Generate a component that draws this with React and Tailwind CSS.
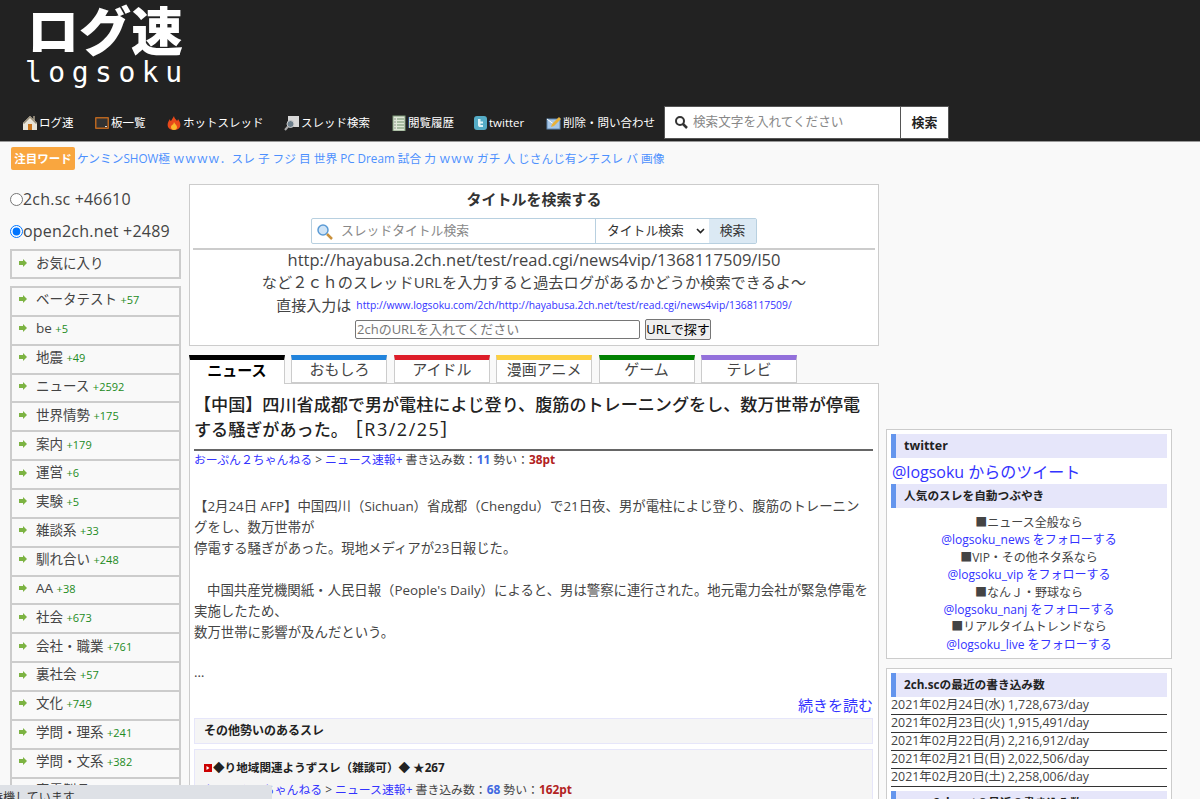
import React from 'react';

const FONT = '"Open Sans", "Noto Sans CJK JP", sans-serif';

const NAV = [
  { label: 'ログ速', icon: 'home', w: 'w-[72px]' },
  { label: '板一覧', icon: 'board', w: 'w-[72px]' },
  { label: 'ホットスレッド', icon: 'fire', w: 'w-[118px]' },
  { label: 'スレッド検索', icon: 'find', w: 'w-[107px]' },
  { label: '閲覧履歴', icon: 'book', w: 'w-[82px]' },
  { label: 'twitter', icon: 'bird', w: 'w-[73px]' },
  { label: '削除・問い合わせ', icon: 'mail', w: 'w-[118px]' },
];

const WORDS = 'ケンミンSHOW極 ｗｗｗｗ．スレ 子 フジ 目 世界 PC Dream 試合 力 ｗｗｗ ガチ 人 じさんじ有ンチスレ バ 画像';

const BOARDS = [
  ['ベータテスト', '+57'], ['be', '+5'], ['地震', '+49'], ['ニュース', '+2592'], ['世界情勢', '+175'],
  ['案内', '+179'], ['運営', '+6'], ['実験', '+5'], ['雑談系', '+33'], ['馴れ合い', '+248'],
  ['AA', '+38'], ['社会', '+673'], ['会社・職業', '+761'], ['裏社会', '+57'], ['文化', '+749'],
  ['学問・理系', '+241'], ['学問・文系', '+382'], ['家電製品', ''],
];

const TABS = [
  { label: 'ニュース', band: 'border-t-black', on: true },
  { label: 'おもしろ', band: 'border-t-[#2083dc]' },
  { label: 'アイドル', band: 'border-t-[#dd1c28]' },
  { label: '漫画アニメ', band: 'border-t-[#fdd040]' },
  { label: 'ゲーム', band: 'border-t-[#008000]' },
  { label: 'テレビ', band: 'border-t-[#9370db]' },
];

const FOLLOWS = [
  ['■ニュース全般なら', '@logsoku_news をフォローする'],
  ['■VIP・その他ネタ系なら', '@logsoku_vip をフォローする'],
  ['■なんＪ・野球なら', '@logsoku_nanj をフォローする'],
  ['■リアルタイムトレンドなら', '@logsoku_live をフォローする'],
];

const COUNTS = [
  '2021年02月24日(水) 1,728,673/day',
  '2021年02月23日(火) 1,915,491/day',
  '2021年02月22日(月) 2,216,912/day',
  '2021年02月21日(日) 2,022,506/day',
  '2021年02月20日(土) 2,258,006/day',
];

// ナビの小さいアイコン
const NavIcon = ({ name }) => {
  if (name === 'home') return (
    <svg width="16" height="16" viewBox="0 0 16 16" className="shrink-0">
      <rect x="11" y="1" width="2" height="5" fill="#8a8172" />
      <path d="M8 1 15 8v7H1V8z" fill="#e8e4d8" />
      <path d="M8 1 15 8l-1 1-6-6-6 6-1-1z" fill="#9a8f7a" />
      <rect x="6" y="9" width="4" height="6" fill="#c8741c" />
    </svg>
  );
  if (name === 'board') return (
    <svg width="16" height="16" viewBox="0 0 16 16" className="shrink-0">
      <rect x="1" y="2" width="14" height="12" rx="1" fill="#b8651f" />
      <rect x="2.500" y="3.500" width="11" height="9" fill="#333" />
      <rect x="11" y="11" width="2" height="1" fill="#ddd" />
    </svg>
  );
  if (name === 'fire') return (
    <svg width="16" height="16" viewBox="0 0 16 16" className="shrink-0">
      <path d="M8 1c.5 3 2 3 3 5 .5-1 1-1 1-2 2 3 3 5 2 8-1 2-3 3-6 3s-5-1-6-3c-1-3 0-5 2-8 0 1 .5 2 1 2 1-2 2-3 3-5z" fill="#e8481a" />
      <path d="M8 7c.5 2 3 3 3 5a3 3 0 0 1-6 0c0-1 1-2 1.500-2.500C7 10 7.500 9 8 7z" fill="#fbb82c" />
    </svg>
  );
  if (name === 'find') return (
    <svg width="16" height="16" viewBox="0 0 16 16" className="shrink-0">
      <rect x="4" y="1" width="11" height="11" fill="#d8d8d8" />
      <circle cx="6.500" cy="9" r="3.500" fill="#6d7f8c" stroke="#ccc" />
      <path d="M4 11.500 1 15" stroke="#aaa" strokeWidth="2" />
    </svg>
  );
  if (name === 'book') return (
    <svg width="16" height="16" viewBox="0 0 16 16" className="shrink-0">
      <rect x="2" y="1" width="12" height="15" fill="#dfe8d8" stroke="#7e9a78" />
      <path d="M6 4h7M6 7h7M6 10h7M6 13h7" stroke="#6f8f6a" />
      <path d="M3.500 4h1M3.500 7h1M3.500 10h1M3.500 13h1" stroke="#444" />
    </svg>
  );
  if (name === 'bird') return (
    <svg width="15" height="16" viewBox="0 0 15 16" className="shrink-0">
      <rect x="1" y="1" width="13" height="14" rx="3" fill="#55acc6" />
      <path d="M5 4v6c0 1.500 1 2 2 2h3v-2H7.500V8.500H10v-2H7.500V4z" fill="#dff3f8" />
    </svg>
  );
  return (
    <svg width="16" height="16" viewBox="0 0 16 16" className="shrink-0">
      <rect x="1" y="4" width="13" height="10" fill="#a8c8e8" stroke="#5d86b0" />
      <path d="M1 4l6.500 5L14 4" stroke="#fff" fill="none" />
      <path d="M6 9l7-7 2 2-7 7-3 1z" fill="#e8b23a" />
    </svg>
  );
};

const Section = ({ children, size = 'text-[11.700px]' }) => (
  <div className={`flex h-6 items-center border-l-[5px] border-[#6495ed] bg-[#e6e6fa] pl-[8px] font-bold text-[#222] ${size}`}>
    {children}
  </div>
);

const Arrow = () => (
  <svg width="8" height="8" viewBox="0 0 8 8" className="shrink-0">
    <path d="M4 0l4 4-4 4V6H0V2h4z" fill="#7cb342" />
  </svg>
);

const Meta = ({ count, speed }) => (
  <>
    <span className="text-[#3333ff]">おーぷん２ちゃんねる</span>{' > '}
    <span className="text-[#3333ff]">ニュース速報+</span> 書き込み数：<b className="text-[#4169e1]">{count}</b> 勢い：<b className="text-[#b22222]">{speed}</b>
  </>
);

export default function App() {
  return (
    <div className="relative h-[799px] w-[1200px] overflow-hidden bg-[#f9f9f9] text-[#444]" style={{ fontFamily: FONT }}>
      {/* ヘッダー */}
      <header className="h-[142px] border-b border-[#999] bg-[#222222]">
        <div className="h-[104px] pl-[27px] pt-[1px] text-white">
          <div className="h-[60px] text-[52px] font-black leading-[60px]">ログ速</div>
          <div className="-ml-[2px] text-[28px] leading-[24px] tracking-[6.500px]" style={{ fontFamily: '"DejaVu Sans Mono", monospace' }}>logsoku</div>
        </div>
        <div className="flex h-[37px] items-center pl-[22px]">
          {NAV.map((n) => (
            <div key={n.label} className={`flex items-center gap-px text-[11.500px] text-white ${n.w}`}>
              <NavIcon name={n.icon} />
              <span className="whitespace-nowrap">{n.label}</span>
            </div>
          ))}
          <div className="flex h-[33px] items-center border border-[#555] bg-white">
            <div className="flex w-[235px] items-center gap-[5px] pl-[9px] text-[12.600px] text-[#888]">
              <svg width="14" height="14" viewBox="0 0 14 14"><circle cx="6" cy="6" r="4" fill="none" stroke="#333" strokeWidth="2" /><path d="M9 9l4 4" stroke="#333" strokeWidth="2.500" /></svg>
              検索文字を入れてください
            </div>
            <div className="flex h-full w-[48px] items-center justify-center border-l border-[#555] text-[13px] font-bold text-[#222]">検索</div>
          </div>
        </div>
      </header>

      {/* 注目ワード */}
      <div className="flex h-[42px] items-start pl-[11px] pt-[5px]">
        <span className="flex h-[23px] w-[64px] items-center justify-center rounded-[2px] bg-[#f9a63f] text-[11.500px] font-bold text-white">注目ワード</span>
        <span className="ml-[2px] text-[11.700px] leading-[23px] text-[#4d90fe]">{WORDS}</span>
      </div>

      <div className="flex items-start">
        {/* 左カラム */}
        <aside className="ml-[10px] w-[171px]">
          <label className="-mt-[1px] flex h-[32px] items-center text-[16px] tracking-[0.200px]">
            <input type="radio" name="src" readOnly className="m-0 h-[13px] w-[13px]" />
            2ch.sc +46610
          </label>
          <label className="flex h-[32px] items-center text-[16px] tracking-[0.200px]">
            <input type="radio" name="src" defaultChecked className="m-0 h-[13px] w-[13px]" />
            open2ch.net +2489
          </label>
          <div className="mt-[2px] flex h-[30px] items-center gap-[9px] border-2 border-[#ccc] bg-[#f9f9f9] pb-[2px] pl-[7px] text-[13.500px]">
            <Arrow />
            お気に入り
          </div>
          <div className="mt-[7px] border-x-2 border-t-2 border-[#ccc]">
            {BOARDS.map(([name, n]) => (
              <div key={name} className="flex h-[28.870px] items-center gap-[9px] border-b-2 border-[#ccc] pb-[4px] pl-[7px] text-[13.500px]">
                <Arrow />
                <span className="whitespace-nowrap">{name} <span className="text-[11px] text-[#228b22]">{n}</span></span>
              </div>
            ))}
          </div>
        </aside>

        {/* 中央カラム */}
        <main className="ml-[8px] w-[690px]">
          <div className="h-[162px] border border-[#ccc] bg-white text-center">
            <div className="pt-[4px] text-[15px] font-bold leading-[20px] text-[#333]">タイトルを検索する</div>
            <div className="mt-[9px] flex justify-center">
              <div className="flex h-[26px] w-[446px] items-center rounded-[2px] border border-[#b8d0e0] text-[12.800px]">
                <div className="flex w-[283px] items-center gap-[8px] pl-[4px] text-left text-[#888]">
                  <svg width="17" height="17" viewBox="0 0 17 17"><circle cx="7" cy="7" r="5" fill="#cfe4f7" stroke="#5b9bd5" strokeWidth="1.500" /><path d="M11 11l5 5" stroke="#c9913d" strokeWidth="2.500" /></svg>
                  スレッドタイトル検索
                </div>
                <div className="flex h-full w-[114px] items-center justify-between border-l border-[#b8d0e0] pl-[11px] pr-[4px] text-[#333]">
                  タイトル検索
                  <svg width="9" height="6" viewBox="0 0 9 6"><path d="M1 1l3.500 3.500L8 1" stroke="#222" strokeWidth="1.600" fill="none" /></svg>
                </div>
                <div className="flex h-full flex-1 items-center justify-center bg-[#dbe9f4] text-[#333]">検索</div>
              </div>
            </div>
            <div className="mx-[3px] mt-[4px] h-[2px] bg-[#ccc]" />
            <div className="-mt-[2px] text-[16.500px] leading-[23px]">http://hayabusa.2ch.net/test/read.cgi/news4vip/1368117509/l50</div>
            <div className="text-[15.200px] leading-[23px]">など２ｃｈのスレッドURLを入力すると過去ログがあるかどうか検索できるよ～</div>
            <div className="flex h-[23px] items-center justify-center text-[15px]">
              直接入力は<span className="ml-[5px] text-[10.300px] text-[#3333ff]">http://www.logsoku.com/2ch/http://hayabusa.2ch.net/test/read.cgi/news4vip/1368117509/</span>
            </div>
            <div className="mt-[2px] flex items-center justify-center gap-[5px] pr-[2px]">
              <div className="flex h-[19px] w-[285px] items-center rounded-[2px] border border-[#767676] pl-[1px] text-left text-[13px] text-[#777]">2chのURLを入れてください</div>
              <div className="flex h-[21px] w-[66px] items-center justify-center rounded-[2px] border border-[#767676] bg-[#efefef] text-[13px] text-black">URLで探す</div>
            </div>
          </div>

          <div className="mt-[9px] flex h-[29px] gap-[6.400px]">
            {TABS.map((t) => (
              <div
                key={t.label}
                className={`flex w-[96px] items-center justify-center border-x border-t-[5px] border-x-[#ccc] bg-white pb-[3px] text-[15px] ${t.band} ${t.on ? 'relative z-10 h-[29px] font-bold text-black' : 'h-[28px] border-b border-b-[#ccc]'}`}
              >
                {t.label}
              </div>
            ))}
          </div>

          <article className="-mt-px border border-[#ccc] bg-white pl-[4px] pr-[5px]">
            <h2 className="border-b-2 border-[#666] pb-[7px] pt-[8px] text-[17.100px] font-medium leading-[25px] text-[#222]">
              【中国】四川省成都で男が電柱によじ登り、腹筋のトレーニングをし、数万世帯が停電する騒ぎがあった。<span className="ml-[6px] text-[18px] tracking-[1.500px]">［R3/2/25］</span>
            </h2>
            <div className="mt-px text-[11.870px] leading-[15px]">
              <Meta count="11" speed="38pt" />
            </div>
            <div className="mt-[29px] text-[13.400px] leading-[21px]">
              <p className="pr-[4px]">【2月24日 AFP】中国四川（Sichuan）省成都（Chengdu）で21日夜、男が電柱によじ登り、腹筋のトレーニングをし、数万世帯が</p>
              <p>停電する騒ぎがあった。現地メディアが23日報じた。</p>
              <p className="mt-[21px] indent-[13px]">中国共産党機関紙・人民日報（People's Daily）によると、男は警察に連行された。地元電力会社が緊急停電を実施したため、</p>
              <p>数万世帯に影響が及んだという。</p>
              <p className="mt-[19px]">…</p>
            </div>
            <div className="mt-[12px] text-right text-[15px] leading-[20px] text-[#3333ff]">続きを読む</div>
            <div className="mt-[3px] flex h-[26px] items-center border border-[#e6e6fa] bg-[#f5f5f5] pl-[9px] text-[12px] font-bold text-[#222]">その他勢いのあるスレ</div>
            <div className="mt-[5px] h-[120px] border border-[#e6e6fa] bg-[#f5f5f5] pl-[9px] pt-[9px]">
              <div className="flex items-center text-[11.600px] font-bold leading-[18px] text-[#222]">
                <svg width="8" height="8" viewBox="0 0 8 8" className="mr-px"><rect width="8" height="8" fill="#c00" /><path d="M2.500 2l3 2-3 2z" fill="#fff" /></svg>
                ◆り地域関連ようずスレ（雑談可）◆ ★267
              </div>
              <div className="mt-[5px] text-[11.870px] leading-[15px]"><Meta count="68" speed="162pt" /></div>
            </div>
          </article>
        </main>

        {/* 右カラム */}
        <aside className="ml-[7px] mt-[245px] w-[286px]">
          <div className="h-[230px] border border-[#ccc] bg-white p-[4px]">
            <Section size="text-[12.500px]">twitter</Section>
            <div className="mt-[3px] h-[23px] pl-px text-[16px] leading-[23px] text-[#3333ff]">@logsoku からのツイート</div>
            <Section>人気のスレを自動つぶやき</Section>
            <div className="mt-[6px] text-center text-[12px] leading-[17.400px]">
              {FOLLOWS.map(([head, link]) => (
                <React.Fragment key={link}>
                  <div>{head}</div>
                  <div className="text-[#3333ff]">{link}</div>
                </React.Fragment>
              ))}
            </div>
          </div>
          <div className="mt-[9px] h-[140px] border border-[#ccc] bg-white p-[4px]">
            <Section>2ch.scの最近の書き込み数</Section>
            {COUNTS.map((c) => (
              <div key={c} className="h-[18px] border-b border-[#333] text-[12.400px] leading-[16px]">{c}</div>
            ))}
            <div className="mt-[4px]"><Section>open2ch.netの最近の書き込み数</Section></div>
          </div>
        </aside>
      </div>

      {/* ステータスバー */}
      <div className="absolute bottom-0 left-0 h-[14px] w-[272px] overflow-hidden rounded-tr-[2px] bg-[#dee1e6] text-[12px] leading-[26px] text-[#333]">
        <span className="-ml-[9px] block whitespace-nowrap">待機しています</span>
      </div>
    </div>
  );
}
